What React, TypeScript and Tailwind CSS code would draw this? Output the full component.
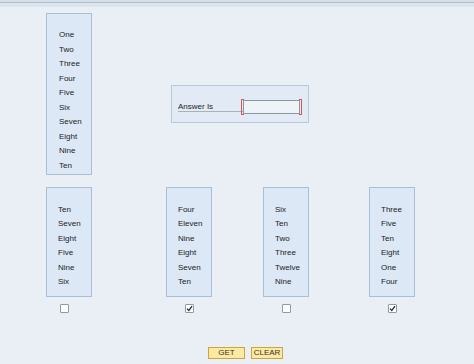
import { useState } from 'react';

const LISTS: { items: string[]; checked: boolean; ml: string; cb: string }[] = [
  { items: ['Ten', 'Seven', 'Eight', 'Five', 'Nine', 'Six'], checked: false, ml: 'ml-[46px]', cb: 'ml-[14px]' },
  { items: ['Four', 'Eleven', 'Nine', 'Eight', 'Seven', 'Ten'], checked: true, ml: 'ml-[74px]', cb: 'ml-[19px]' },
  { items: ['Six', 'Ten', 'Two', 'Three', 'Twelve', 'Nine'], checked: false, ml: 'ml-[51px]', cb: 'ml-[19px]' },
  { items: ['Three', 'Five', 'Ten', 'Eight', 'One', 'Four'], checked: true, ml: 'ml-[60px]', cb: 'ml-[19px]' },
];

const SOURCE = ['One', 'Two', 'Three', 'Four', 'Five', 'Six', 'Seven', 'Eight', 'Nine', 'Ten'];

function Check({ on }: { on: boolean }) {
  return (
    <div className="w-[9px] h-[9px] border border-[#8f9aa6] bg-white rounded-[1px] flex items-center justify-center">
      {on && (
        <svg width="7" height="7" viewBox="0 0 7 7">
          <path d="M1 3.6 L2.8 5.4 L6 1.2" stroke="#2a2a2a" strokeWidth="1.3" fill="none" />
        </svg>
      )}
    </div>
  );
}

export default function App() {
  const [answer, setAnswer] = useState('');

  return (
    <div className="w-[474px] h-[364px] bg-[#e9eff5] font-['Liberation_Sans',sans-serif] text-[8px] text-[#222] overflow-hidden">
      {/* top strip */}
      <div className="h-[2px] bg-[#d6e0ea]" />
      <div className="h-[1px] bg-[#aebfcf]" />
      <div className="h-[4px] bg-[#dbe5ee]" />

      <div className="flex items-start pt-[6px]">
        <div className="ml-[46px] w-[46px] h-[162px] border border-[#a9bfd6] bg-[#dce8f5] pl-[12px] pt-[14px]">
          {SOURCE.map((s) => (
            <div key={s} className="leading-[14.5px]">{s}</div>
          ))}
        </div>

        <div className="ml-[79px] mt-[72px] w-[138px] h-[38px] border border-[#b6c8da] bg-[#e2ebf5] flex items-center pl-[6px] pt-[5px]">
          <div className="relative flex items-center">
            <span className="w-[63px] leading-[10px]">Answer Is</span>
            <div className="absolute left-0 top-[12px] w-[68px] h-[1px] bg-[#a7b1bb]" />
            <div className="relative w-[61px] h-[16px] px-[2px] py-[1px]">
              <input
                value={answer}
                onChange={(e) => setAnswer(e.target.value)}
                className="w-full h-full border border-[#8d969f] bg-[#eef3f8] outline-none text-[8px] px-[2px]"
              />
              <span className="absolute left-0 top-0 w-[3px] h-full border-l border-t border-b border-[#d9534f]" />
              <span className="absolute right-0 top-0 w-[3px] h-full border-r border-t border-b border-[#d9534f]" />
            </div>
          </div>
        </div>
      </div>

      <div className="flex items-start mt-[12px]">
        {LISTS.map((l, i) => (
          <div key={i} className={`${l.ml} flex flex-col`}>
            <div className="w-[46px] h-[110px] border border-[#a9bfd6] bg-[#dce8f5] pl-[11px] pt-[15px]">
              {l.items.map((s, j) => (
                <div key={j} className="leading-[14.4px]">{s}</div>
              ))}
            </div>
            <div className={`${l.cb} mt-[7px]`}>
              <Check on={l.checked} />
            </div>
          </div>
        ))}
      </div>

      <div className="flex gap-[6px] ml-[208px] mt-[34px]">
        <button className="w-[37px] h-[12px] border border-[#c9a544] bg-[#fde9a0] text-[8px] leading-[10px] text-[#333]">
          GET
        </button>
        <button className="w-[32px] h-[12px] border border-[#c9a544] bg-[#fde9a0] text-[8px] leading-[10px] text-[#333]">
          CLEAR
        </button>
      </div>
    </div>
  );
}
